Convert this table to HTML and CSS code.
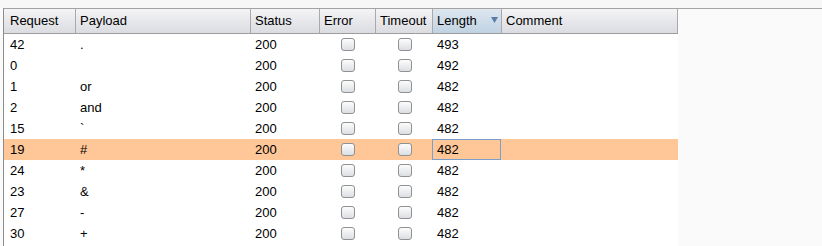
FILE: index.html
```html
<!DOCTYPE html>
<html>
<head>
<meta charset="utf-8">
<link rel="stylesheet" href="styles.css">
</head>
<body>
<div class="topstrip"></div>
<div class="frame">
  <div class="table">
    <div class="row head">
      <div class="hc first">Request</div>
      <div class="hc">Payload</div>
      <div class="hc">Status</div>
      <div class="hc">Error</div>
      <div class="hc">Timeout</div>
      <div class="hc sorted">Length<svg class="arrow" width="7" height="6" viewBox="0 0 7 6"><polygon points="0,0 7,0 3.5,6" fill="#5b7ea7"/></svg></div>
      <div class="hc">Comment</div>
    </div>
    <div class="row"><div class="c first">42</div><div class="c">.</div><div class="c">200</div><div class="c cbc"><span class="cb"></span></div><div class="c cbc"><span class="cb"></span></div><div class="c">493</div><div class="c"></div></div>
    <div class="row"><div class="c first">0</div><div class="c"></div><div class="c">200</div><div class="c cbc"><span class="cb"></span></div><div class="c cbc"><span class="cb"></span></div><div class="c">492</div><div class="c"></div></div>
    <div class="row"><div class="c first">1</div><div class="c">or</div><div class="c">200</div><div class="c cbc"><span class="cb"></span></div><div class="c cbc"><span class="cb"></span></div><div class="c">482</div><div class="c"></div></div>
    <div class="row"><div class="c first">2</div><div class="c">and</div><div class="c">200</div><div class="c cbc"><span class="cb"></span></div><div class="c cbc"><span class="cb"></span></div><div class="c">482</div><div class="c"></div></div>
    <div class="row"><div class="c first">15</div><div class="c">`</div><div class="c">200</div><div class="c cbc"><span class="cb"></span></div><div class="c cbc"><span class="cb"></span></div><div class="c">482</div><div class="c"></div></div>
    <div class="row selected"><div class="c first">19</div><div class="c">#</div><div class="c">200</div><div class="c cbc"><span class="cb"></span></div><div class="c cbc"><span class="cb"></span></div><div class="c focus">482</div><div class="c"></div></div>
    <div class="row"><div class="c first">24</div><div class="c">*</div><div class="c">200</div><div class="c cbc"><span class="cb"></span></div><div class="c cbc"><span class="cb"></span></div><div class="c">482</div><div class="c"></div></div>
    <div class="row"><div class="c first">23</div><div class="c">&amp;</div><div class="c">200</div><div class="c cbc"><span class="cb"></span></div><div class="c cbc"><span class="cb"></span></div><div class="c">482</div><div class="c"></div></div>
    <div class="row"><div class="c first">27</div><div class="c">-</div><div class="c">200</div><div class="c cbc"><span class="cb"></span></div><div class="c cbc"><span class="cb"></span></div><div class="c">482</div><div class="c"></div></div>
    <div class="row"><div class="c first">30</div><div class="c">+</div><div class="c">200</div><div class="c cbc"><span class="cb"></span></div><div class="c cbc"><span class="cb"></span></div><div class="c">482</div><div class="c"></div></div>
  </div>
</div>
</body>
</html>
```
FILE: styles.css
```css
html, body {
  margin: 0;
  padding: 0;
  height: 246px;
  overflow: hidden;
}
body {
  background: #fafafa;
  font-family: "Liberation Sans", Arial, sans-serif;
  font-size: 13px;
  color: #000;
}
.topstrip {
  height: 8px;
  background: #f7f7f7;
}
.frame {
  margin-left: 3px;
  border-top: 1px solid #a3a3a3;
  border-left: 1px solid #8c8c8c;
  height: 237px;
  display: flex;
  background: #fafafa;
}
.table {
  width: 674px;
  background: #fff;
}
.row {
  display: grid;
  grid-template-columns: 72px 175px 69px 56px 57px 69px 176px;
  height: 21px;
  line-height: 21px;
}
.row.head {
  height: 25px;
  line-height: 24px;
  border-bottom: 1px solid #9d9d9d;
  box-sizing: border-box;
}
.hc {
  position: relative;
  height: 24px;
  box-sizing: border-box;
  padding-left: 4px;
  background: linear-gradient(#f4f4f6, #dbdce1);
  border-right: 1px solid #a9a9a9;
  white-space: nowrap;
}
.hc.first, .c.first {
  padding-left: 6px;
}
.hc.sorted {
  background: linear-gradient(#dde7f0, #c0d2e2);
}
.arrow {
  position: absolute;
  left: 58px;
  top: 8px;
}
.c {
  padding-left: 4px;
  box-sizing: border-box;
  white-space: nowrap;
}
.cbc {
  display: flex;
  align-items: center;
  justify-content: center;
  padding-left: 0;
}
.cb {
  display: block;
  width: 14px;
  height: 13px;
  box-sizing: border-box;
  border: 1px solid #8f9193;
  border-radius: 3px;
  background: linear-gradient(#fcfcfc, #dcdfe3);
}
.selected {
  background: #ffc697;
}
.focus {
  border: 1px solid #7a9fcc;
  margin-left: -1px;
  margin-right: 1px;
  padding-left: 4px;
  line-height: 19px;
}
```
